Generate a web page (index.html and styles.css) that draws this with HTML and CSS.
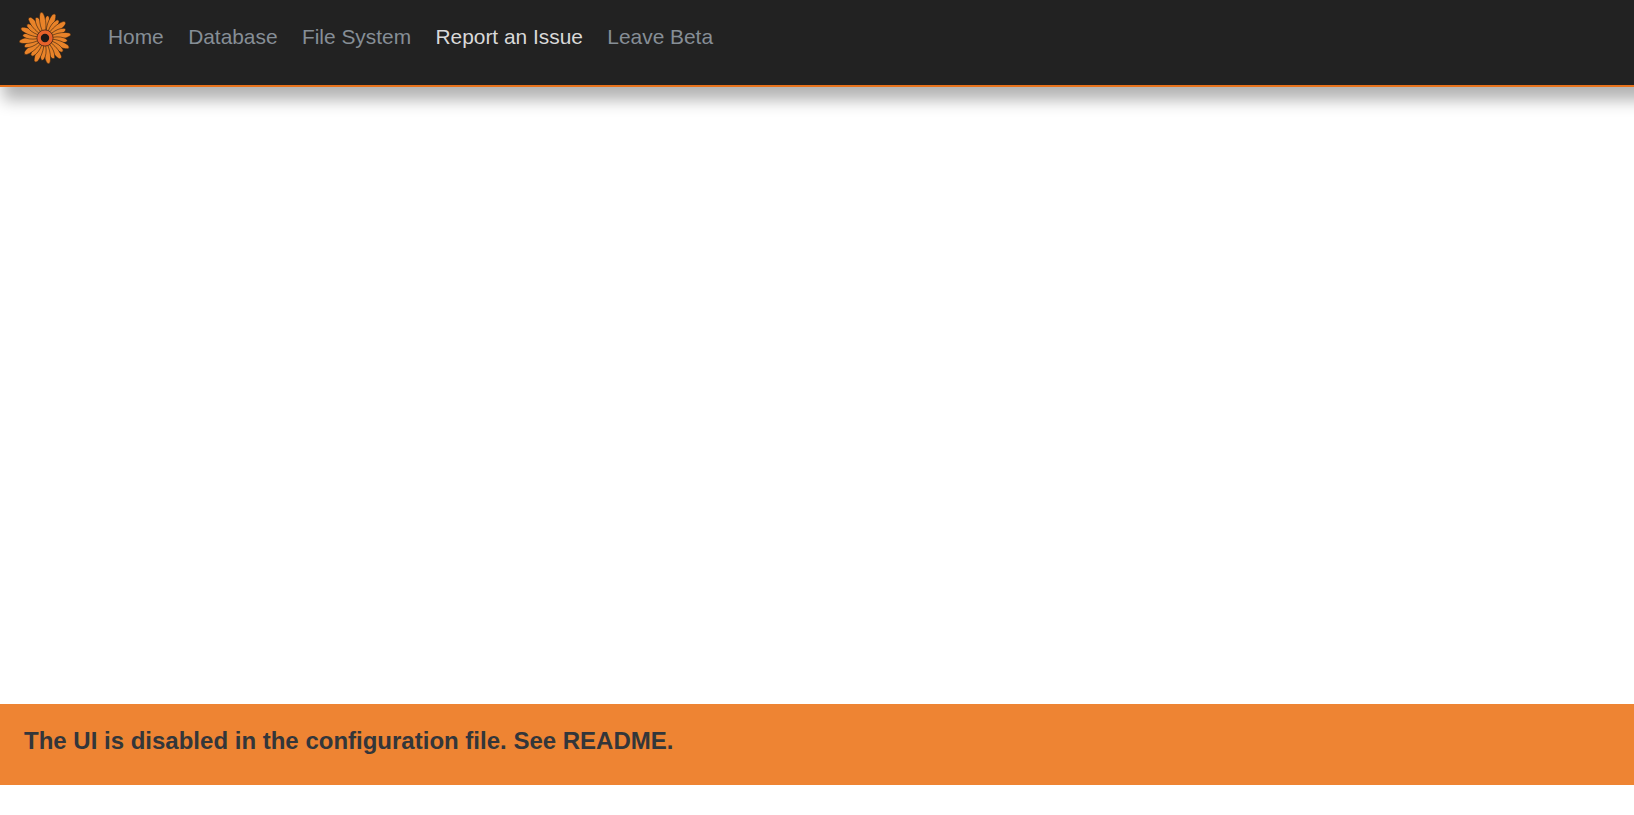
FILE: index.html
```html
<!DOCTYPE html>
<html lang="en">
<head>
<meta charset="utf-8">
<title>UI disabled</title>
<link rel="stylesheet" href="styles.css">
</head>
<body>
<header class="navbar">
  <a class="brand" href="#" aria-label="Home">
    <svg class="logo" width="56" height="56" viewBox="-28 -28 56 56">
      <defs>
        <path id="pl" d="M-1.9 -8 C-3.4 -14 -3.4 -21 -1.6 -25 Q0 -27 1.6 -25 C3.4 -21 3.4 -14 1.9 -8 Z"/>
        <path id="ps" d="M-1.8 -8 C-3.2 -13 -3.2 -18 -1.5 -21.5 Q0 -23.5 1.5 -21.5 C3.2 -18 3.2 -13 1.8 -8 Z"/>
      </defs>
      <circle class="halo" r="14"/>
      <g class="petals">
        <use href="#ps" transform="rotate(7)"/><use href="#pl" transform="rotate(22)"/>
        <use href="#ps" transform="rotate(37)"/><use href="#pl" transform="rotate(52)"/>
        <use href="#ps" transform="rotate(67)"/><use href="#pl" transform="rotate(82)"/>
        <use href="#ps" transform="rotate(97)"/><use href="#pl" transform="rotate(112)"/>
        <use href="#ps" transform="rotate(127)"/><use href="#pl" transform="rotate(142)"/>
        <use href="#ps" transform="rotate(157)"/><use href="#pl" transform="rotate(172)"/>
        <use href="#ps" transform="rotate(187)"/><use href="#pl" transform="rotate(202)"/>
        <use href="#ps" transform="rotate(217)"/><use href="#pl" transform="rotate(232)"/>
        <use href="#ps" transform="rotate(247)"/><use href="#pl" transform="rotate(262)"/>
        <use href="#ps" transform="rotate(277)"/><use href="#pl" transform="rotate(292)"/>
        <use href="#ps" transform="rotate(307)"/><use href="#pl" transform="rotate(322)"/>
        <use href="#ps" transform="rotate(337)"/><use href="#pl" transform="rotate(352)"/>
      </g>
      <circle class="disc" r="6"/>
    </svg>
  </a>
  <nav class="nav">
    <a class="nav-link" href="#">Home</a>
    <a class="nav-link" href="#">Database</a>
    <a class="nav-link" href="#">File System</a>
    <a class="nav-link active" href="#">Report an Issue</a>
    <a class="nav-link" href="#">Leave Beta</a>
  </nav>
</header>
<main class="content"></main>
<div class="alert">The UI is disabled in the configuration file. See README.</div>
</body>
</html>
```
FILE: styles.css
```css
* { box-sizing: border-box; }
html, body { margin: 0; height: 100%; }
body {
  display: flex;
  flex-direction: column;
  height: 815px;
  overflow: hidden;
  background: #fff;
  font-family: "Liberation Sans", Arial, sans-serif;
}
.navbar {
  position: relative;
  flex: none;
  display: flex;
  align-items: flex-start;
  height: 87px;
  padding: 10px 0 0 17px;
  background: #222;
  border-bottom: 2px solid #e8731c;
  box-shadow: 13px 3px 15px 10px rgba(0, 0, 0, 0.3);
}
.brand { display: block; height: 56px; }
.logo { display: block; filter: blur(0.5px); }
.halo { fill: #1c1410; }
.petals { fill: #e98329; stroke: #1c1410; stroke-width: 0.5; stroke-linejoin: round; }
.disc { fill: #1f1916; stroke: #e8622a; stroke-width: 3.6; }
.nav { display: flex; gap: 24.4px; margin: 15px 0 0 35px; }
.nav-link {
  font-size: 20.9px;
  line-height: 24px;
  color: #868e96;
  text-decoration: none;
}
.nav-link.active { color: #d9d9d9; }
.content { flex: none; height: 617px; }
.alert {
  flex: none;
  height: 81px;
  padding: 23px 24px 0;
  background: #ee8433;
  color: #33363a;
  font-size: 24px;
  line-height: 28px;
  font-weight: bold;
}
```
